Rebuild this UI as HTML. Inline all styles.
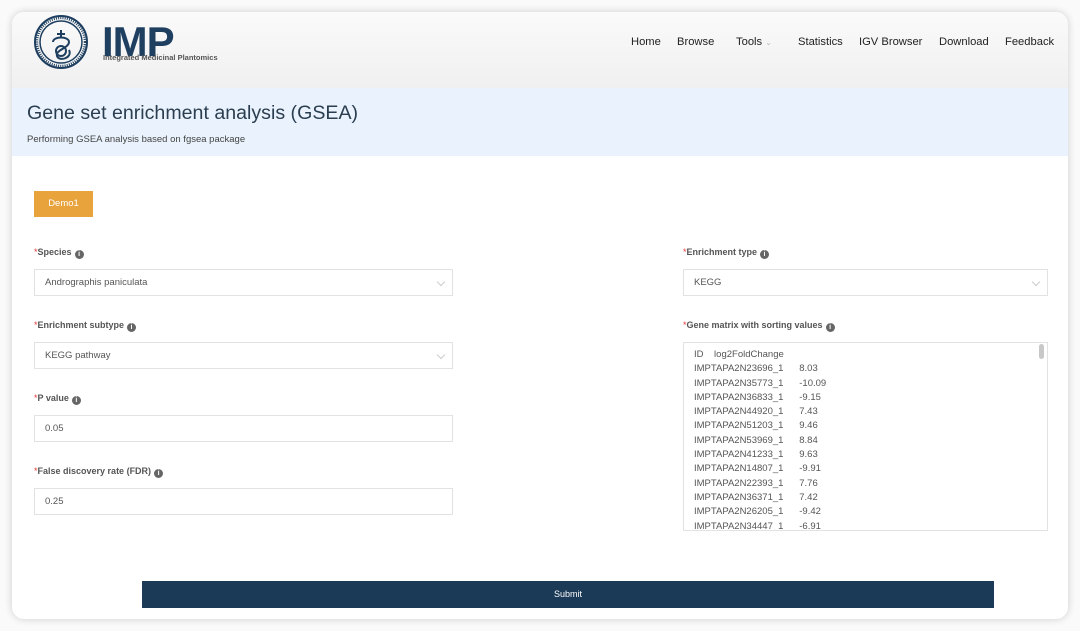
<!DOCTYPE html>
<html><head><meta charset="utf-8"><style>
*{margin:0;padding:0;box-sizing:border-box}
body{width:1080px;height:631px;background:#fafafa;font-family:"Liberation Sans",Arial,sans-serif;position:relative;overflow:hidden}
.card{position:absolute;left:12px;top:12px;width:1056px;height:607px;background:#fff;border-radius:12px;box-shadow:0 0 8px rgba(0,0,0,.18);overflow:hidden}
.hdr{position:absolute;left:0;top:0;width:1056px;height:76px;background:linear-gradient(180deg,#fafafa,#f0f0f0)}
.nav{position:absolute;top:24px;font-size:11.2px;color:#222}
.ban{position:absolute;left:0;top:76px;width:1056px;height:68px;background:#eaf3fd}
.a{position:absolute}
.lbl{position:absolute;font-size:9px;font-weight:bold;color:#555}
.lbl b{color:#e33;font-weight:normal}
.lbl i{display:inline-block;width:9px;height:9px;border-radius:50%;background:#666;color:#fff;font-size:7px;font-style:normal;text-align:center;line-height:9px;vertical-align:-1px;margin-left:3px}
.box{position:absolute;border:1px solid #e2e2e2;background:#fff;font-size:9.5px;color:#555;padding-left:10px;line-height:26px}
.chev{position:absolute;right:8px;top:9px;width:6px;height:6px;border-right:1px solid #ccc;border-bottom:1px solid #ccc;transform:rotate(45deg)}
.ta{position:absolute;left:671px;top:330px;width:365px;height:189px;border:1px solid #e2e2e2;font-size:9.5px;color:#555;padding:5px 0 0 10px;line-height:14.3px;white-space:pre;overflow:hidden}
</style></head><body>
<div class="card">
<div class="hdr">
<svg class="a" style="left:21px;top:2px" width="56" height="56" viewBox="0 0 56 56"><circle cx="28" cy="28" r="26" fill="none" stroke="#1e3f5f" stroke-width="2"/><circle cx="28" cy="28" r="21" fill="none" stroke="#1e3f5f" stroke-width="1.5"/><circle cx="28" cy="28" r="24" fill="none" stroke="#1e3f5f" stroke-width="2.5" stroke-dasharray="1 1.2"/><path d="M28 16v8M24 20h8M20 28c0-6 16-6 16 0s-14 8-12 14 16 2 12-6" fill="none" stroke="#1e3f5f" stroke-width="2"/><circle cx="28" cy="37" r="5" fill="none" stroke="#1e3f5f" stroke-width="2"/></svg>
<div class="a" style="left:90px;top:9px;font-size:42px;font-weight:bold;color:#1e3f5f;letter-spacing:-1px;line-height:42px">IMP</div>
<div class="a" style="left:91px;top:41px;font-size:7.5px;font-weight:bold;color:#555">Integrated Medicinal Plantomics</div>
<div class="nav" style="left:619px">Home</div>
<div class="nav" style="left:665px">Browse</div>
<div class="nav" style="left:724px">Tools <span style="color:#bbb;font-size:8px">&#8964;</span></div>
<div class="nav" style="left:786px">Statistics</div>
<div class="nav" style="left:847px">IGV Browser</div>
<div class="nav" style="left:927px">Download</div>
<div class="nav" style="left:993px">Feedback</div>
</div>
<div class="ban">
<div class="a" style="left:15px;top:14px;font-size:19.6px;color:#2b3e50">Gene set enrichment analysis (GSEA)</div>
<div class="a" style="left:15px;top:46px;font-size:9.5px;color:#444">Performing GSEA analysis based on fgsea package</div>
</div>
<div class="a" style="left:22px;top:179px;width:59px;height:26px;background:#e8a33d;color:#fff;font-size:9.5px;text-align:center;line-height:26px">Demo1</div>
<div class="lbl" style="left:22px;top:235px"><b>*</b>Species<i>i</i></div>
<div class="box" style="left:22px;top:257px;width:419px;height:27px">Andrographis paniculata<div class="chev"></div></div>
<div class="lbl" style="left:22px;top:308px"><b>*</b>Enrichment subtype<i>i</i></div>
<div class="box" style="left:22px;top:330px;width:419px;height:27px">KEGG pathway<div class="chev"></div></div>
<div class="lbl" style="left:22px;top:381px"><b>*</b>P value<i>i</i></div>
<div class="box" style="left:22px;top:403px;width:419px;height:27px">0.05</div>
<div class="lbl" style="left:22px;top:454px"><b>*</b>False discovery rate (FDR)<i>i</i></div>
<div class="box" style="left:22px;top:476px;width:419px;height:27px">0.25</div>
<div class="lbl" style="left:671px;top:235px"><b>*</b>Enrichment type<i>i</i></div>
<div class="box" style="left:671px;top:257px;width:365px;height:27px">KEGG<div class="chev"></div></div>
<div class="lbl" style="left:671px;top:308px"><b>*</b>Gene matrix with sorting values<i>i</i></div>
<div class="ta">ID    log2FoldChange
IMPTAPA2N23696_1      8.03
IMPTAPA2N35773_1      -10.09
IMPTAPA2N36833_1      -9.15
IMPTAPA2N44920_1      7.43
IMPTAPA2N51203_1      9.46
IMPTAPA2N53969_1      8.84
IMPTAPA2N41233_1      9.63
IMPTAPA2N14807_1      -9.91
IMPTAPA2N22393_1      7.76
IMPTAPA2N36371_1      7.42
IMPTAPA2N26205_1      -9.42
IMPTAPA2N34447_1      -6.91</div>
<div class="a" style="left:1027px;top:332px;width:5px;height:15px;background:#c8c8c8;border-radius:3px"></div>
<div class="a" style="left:130px;top:569px;width:852px;height:27px;background:#1b3a57;color:#fff;font-size:9px;text-align:center;line-height:27px">Submit</div>
</div>
</body></html>
